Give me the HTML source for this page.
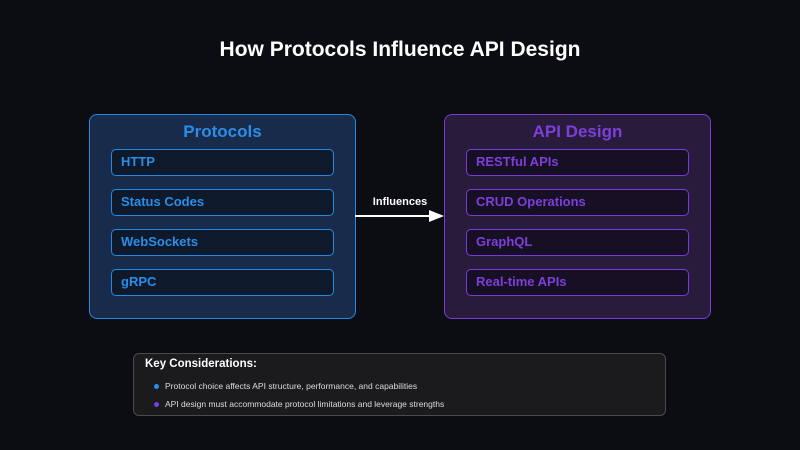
<!DOCTYPE html><html><head><style>
body{margin:0;width:800px;height:450px;background:#0c0d12;font-family:"Liberation Sans",sans-serif;position:relative;overflow:hidden}
.a{position:absolute;box-sizing:border-box}
h1{position:absolute;top:38px;left:0;width:800px;text-align:center;margin:0;font-size:21px;color:#fff;font-weight:bold}
.box{border:1.5px solid;border-radius:8px}
.t{position:absolute;width:100%;text-align:center;top:7px;font-size:17px;font-weight:bold}
.it{position:absolute;left:21px;width:223px;height:27px;border:1.3px solid;border-radius:5px;font-size:13px;font-weight:bold;line-height:24px;padding-left:9px;box-sizing:border-box}
.L{background:#182b4b;border-color:#2289e6}.L .t,.L .it{color:#2a8ee8}.L .it{background:#0e1a2b;border-color:#2289e6}
.R{background:#281b3c;border-color:#7a3ad8}.R .t,.R .it{color:#7c3fdb}.R .it{background:#170f24;border-color:#7a3ad8}
.k{left:133px;top:353px;width:533px;height:63px;background:#1b1b1d;border:1px solid #4a4a4e;border-radius:6px;color:#ddd}
.k b{position:absolute;left:11px;top:4px;font-size:11.5px;color:#fff}
.k p{position:absolute;left:31px;margin:0;font-size:8.5px;color:#ddd}
.k i{position:absolute;left:-11px;top:3px;width:5px;height:5px;border-radius:50%}
</style></head><body>
<h1>How Protocols Influence API Design</h1>
<div class="a box L" style="left:89px;top:114px;width:267px;height:205px">
<div class="t">Protocols</div>
<div class="it" style="top:34px">HTTP</div>
<div class="it" style="top:74px">Status Codes</div>
<div class="it" style="top:114px">WebSockets</div>
<div class="it" style="top:154px">gRPC</div>
</div>
<div class="a box R" style="left:444px;top:114px;width:267px;height:205px">
<div class="t">API Design</div>
<div class="it" style="top:34px">RESTful APIs</div>
<div class="it" style="top:74px">CRUD Operations</div>
<div class="it" style="top:114px">GraphQL</div>
<div class="it" style="top:154px">Real-time APIs</div>
</div>
<div class="a" style="left:356px;top:196px;width:88px;text-align:center;color:#fff;font-size:11px;font-weight:bold">Influences</div>
<svg class="a" style="left:355px;top:206px" width="90" height="20"><line x1="0" y1="10" x2="76" y2="10" stroke="#fff" stroke-width="2"/><polygon points="74,4 89,10 74,16" fill="#fff"/></svg>
<div class="a k"><b>Key Considerations:</b>
<p style="top:27px"><i style="background:#2a8ee8"></i>Protocol choice affects API structure, performance, and capabilities</p>
<p style="top:45px"><i style="background:#7c3fdb"></i>API design must accommodate protocol limitations and leverage strengths</p></div>
</body></html>
